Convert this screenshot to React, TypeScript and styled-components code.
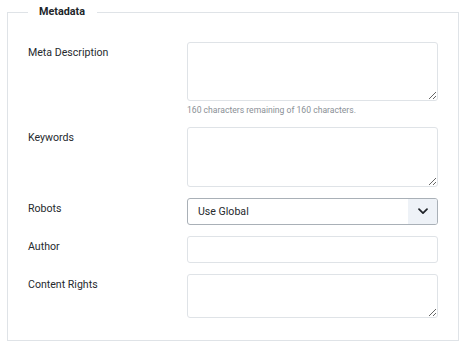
import React from 'react';
import styled, { createGlobalStyle } from 'styled-components';

const GlobalStyle = createGlobalStyle`
  html, body {
    margin: 0;
    padding: 0;
    background: #ffffff;
  }

  body {
    font-family: Roboto, "Liberation Sans", Arial, sans-serif;
    color: #22262a;
  }
`;

const Page = styled.div`
  padding: 1px 15px 0 7px;
`;

const Fieldset = styled.fieldset`
  margin: 0;
  padding: 19px 20px 22px 20px;
  border: 1px solid #dfe3e7;
  min-width: 0;
`;

const Legend = styled.legend`
  padding: 0 12px 0 11px;
  font-size: 10.8px;
  font-weight: 700;
  line-height: 22px;
  color: #22262a;
`;

const Rows = styled.div`
  display: flex;
  flex-direction: column;
  gap: 11px;
`;

const Row = styled.div`
  display: grid;
  grid-template-columns: 159px 251px;
  align-items: start;
`;

const Label = styled.label`
  font-size: 10.6px;
  line-height: 22px;
  color: #262a2e;
`;

const Field = styled.div`
  display: flex;
  flex-direction: column;
`;

const TextArea = styled.textarea<{ $h: number }>`
  box-sizing: border-box;
  width: 100%;
  height: ${(p) => p.$h}px;
  margin: 0;
  padding: 4px 10px;
  border: 1px solid #dfe3e7;
  border-radius: 3px;
  font-family: inherit;
  font-size: 10.6px;
  resize: vertical;
  display: block;
  background: #fff;
`;

const Input = styled.input`
  box-sizing: border-box;
  width: 100%;
  height: 27px;
  margin: 0;
  padding: 0 10px;
  border: 1px solid #dfe3e7;
  border-radius: 3px;
  font-family: inherit;
  font-size: 10.6px;
  display: block;
  background: #fff;
`;

const Help = styled.div`
  margin-top: 3px;
  font-size: 8.6px;
  line-height: 12px;
  color: #8a9096;
`;

const SelectBox = styled.div`
  box-sizing: border-box;
  height: 27px;
  border: 1px solid #a9b0b7;
  border-radius: 3px;
  display: flex;
  align-items: stretch;
  overflow: hidden;
  background: #fff;
`;

const SelectValue = styled.span`
  flex: 1;
  display: flex;
  align-items: center;
  padding-left: 10px;
  font-size: 10.6px;
  color: #262a2e;
`;

const Caret = styled.span`
  width: 29px;
  display: flex;
  align-items: center;
  justify-content: center;
  background: #eef2f7;
`;

export default function App() {
  return (
    <Page>
      <GlobalStyle />
      <Fieldset>
        <Legend>Metadata</Legend>
        <Rows>
          <Row>
            <Label>Meta Description</Label>
            <Field>
              <TextArea $h={59} />
              <Help>160 characters remaining of 160 characters.</Help>
            </Field>
          </Row>
          <Row>
            <Label>Keywords</Label>
            <Field>
              <TextArea $h={60} />
            </Field>
          </Row>
          <Row>
            <Label>Robots</Label>
            <Field>
              <SelectBox>
                <SelectValue>Use Global</SelectValue>
                <Caret>
                  <svg width="10" height="7" viewBox="0 0 10 7" fill="none">
                    <path d="M1 1.2l4 4 4-4" stroke="#1f2328" strokeWidth="1.7" strokeLinecap="round" strokeLinejoin="round" />
                  </svg>
                </Caret>
              </SelectBox>
            </Field>
          </Row>
          <Row>
            <Label>Author</Label>
            <Field>
              <Input type="text" />
            </Field>
          </Row>
          <Row>
            <Label>Content Rights</Label>
            <Field>
              <TextArea $h={44} />
            </Field>
          </Row>
        </Rows>
      </Fieldset>
    </Page>
  );
}
